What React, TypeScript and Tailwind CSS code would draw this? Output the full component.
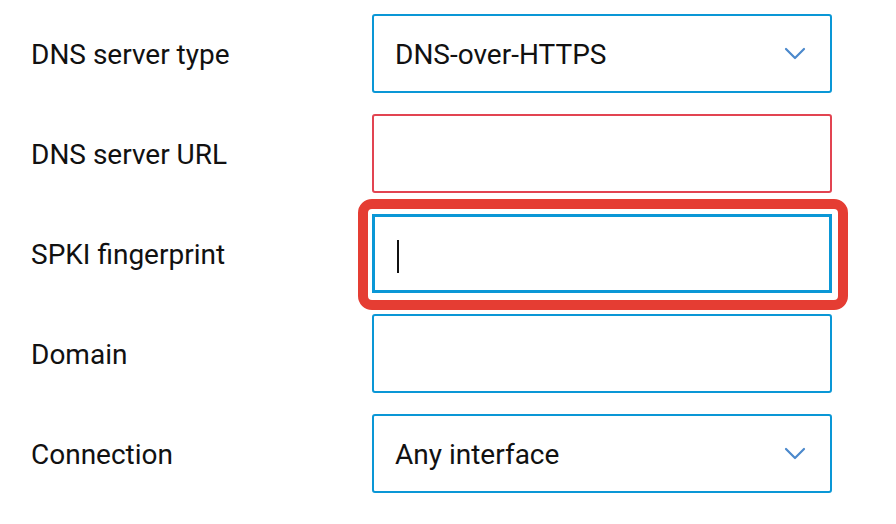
import React from 'react';

const Chevron: React.FC = () => (
  <svg width="22" height="13" viewBox="0 0 22 13" fill="none" className="shrink-0">
    <path d="M2 2l9 9 9-9" stroke="#4b89cc" strokeWidth="2.2" strokeLinecap="round" strokeLinejoin="round" />
  </svg>
);

interface RowProps {
  label: string;
  children: React.ReactNode;
}

const Row: React.FC<RowProps> = ({ label, children }) => (
  <div className="flex items-center h-[79px]">
    <div className="w-[372px] pl-[31px] pt-[3px] text-[28px] leading-none text-[#111]">{label}</div>
    <div className="relative w-[460px] h-full">{children}</div>
  </div>
);

export default function App() {
  return (
    <div
      className="w-[896px] h-[524px] bg-white overflow-hidden flex flex-col gap-[21px] pt-[14px]"
      style={{ fontFamily: 'Roboto, "Noto Sans", sans-serif' }}
    >
      <Row label="DNS server type">
        <div className="h-full flex items-center justify-between border-2 border-[#0a97d6] rounded-[3px] pl-[21px] pr-[24px] text-[28px] leading-none text-[#111]">
          <span className="pt-[3px]">DNS-over-HTTPS</span>
          <Chevron />
        </div>
      </Row>

      <Row label="DNS server URL">
        <div className="h-full border-2 border-[#e24451] rounded-[3px]" />
      </Row>

      <Row label="SPKI fingerprint">
        {/* highlight ring */}
        <div className="absolute -left-[14px] -right-[16px] -top-[15px] -bottom-[17px] border-[10px] border-[#e53d33] rounded-[14px] pointer-events-none" />
        <div className="h-full flex items-center border-[3px] border-[#0a97d6] pl-[22px]">
          <span className="block w-[2px] h-[33px] bg-[#111] mt-[6px]" />
        </div>
      </Row>

      <Row label="Domain">
        <div className="h-full border-2 border-[#0a97d6] rounded-[3px]" />
      </Row>

      <Row label="Connection">
        <div className="h-full flex items-center justify-between border-2 border-[#0a97d6] rounded-[3px] pl-[21px] pr-[24px] text-[28px] leading-none text-[#111]">
          <span className="pt-[3px]">Any interface</span>
          <Chevron />
        </div>
      </Row>
    </div>
  );
}
